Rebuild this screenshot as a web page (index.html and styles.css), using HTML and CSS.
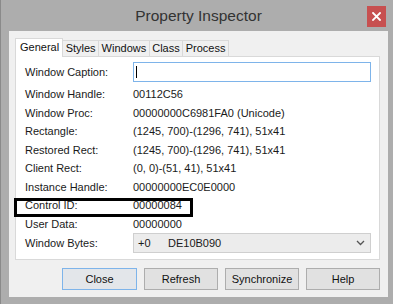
FILE: index.html
```html
<!DOCTYPE html>
<html>
<head>
<meta charset="utf-8">
<link rel="stylesheet" href="styles.css">
</head>
<body>
<div class="window">
  <div class="titlebar">
    <span class="title">Property Inspector</span>
    <button class="close-x" aria-label="Close">
      <svg width="9" height="9" viewBox="0 0 9 9"><path d="M1 1 L8 8 M8 1 L1 8" stroke="#fff" stroke-width="1.8" stroke-linecap="square"/></svg>
    </button>
  </div>
  <div class="client">
    <div class="tabs">
      <div class="tab active">General</div>
      <div class="tab">Styles</div>
      <div class="tab">Windows</div>
      <div class="tab">Class</div>
      <div class="tab">Process</div>
    </div>
    <div class="panel">
      <div class="row caption-row">
        <span class="label">Window Caption:</span>
        <div class="input"><span class="caret"></span></div>
      </div>
      <div class="row"><span class="label">Window Handle:</span><span class="value">00112C56</span></div>
      <div class="row"><span class="label">Window Proc:</span><span class="value">00000000C6981FA0 (Unicode)</span></div>
      <div class="row"><span class="label">Rectangle:</span><span class="value">(1245, 700)-(1296, 741), 51x41</span></div>
      <div class="row"><span class="label">Restored Rect:</span><span class="value">(1245, 700)-(1296, 741), 51x41</span></div>
      <div class="row"><span class="label">Client Rect:</span><span class="value">(0, 0)-(51, 41), 51x41</span></div>
      <div class="row"><span class="label">Instance Handle:</span><span class="value">00000000EC0E0000</span></div>
      <div class="row marked"><span class="label">Control ID:</span><span class="value">00000084</span><span class="mark"></span></div>
      <div class="row"><span class="label">User Data:</span><span class="value">00000000</span></div>
      <div class="row combo-row">
        <span class="label">Window Bytes:</span>
        <div class="combo">
          <span class="offset">+0</span>
          <span class="bytes">DE10B090</span>
          <svg class="chev" width="9" height="6" viewBox="0 0 9 6"><path d="M1 1 L4.5 4.5 L8 1" fill="none" stroke="#555" stroke-width="1.3"/></svg>
        </div>
      </div>
    </div>
    <div class="buttons">
      <button class="btn default">Close</button>
      <button class="btn">Refresh</button>
      <button class="btn">Synchronize</button>
      <button class="btn">Help</button>
    </div>
  </div>
</div>
</body>
</html>
```
FILE: styles.css
```css
* { box-sizing: border-box; }
html, body { margin: 0; padding: 0; }
body {
  width: 393px;
  height: 304px;
  overflow: hidden;
  background: #adadad;
  font-family: "Liberation Sans", Arial, sans-serif;
  font-size: 11px;
  color: #1a1a1a;
}
.window {
  width: 393px;
  height: 304px;
  padding: 0 5px 7px 8px;
  display: flex;
  flex-direction: column;
  background: #adadad;
  border-left: 1px solid #8a8a8a;
}
.titlebar {
  height: 31px;
  display: grid;
  grid-template-columns: 1fr auto 1fr;
  align-items: start;
}
.title {
  grid-column: 2;
  font-size: 15.5px;
  color: #333;
  line-height: 18px;
  margin-top: 7px;
}
.close-x {
  grid-column: 3;
  justify-self: end;
  margin: 6px 2px 0 0;
  width: 19px;
  height: 21px;
  border: none;
  padding: 0;
  background: #c75050;
  display: flex;
  align-items: center;
  justify-content: center;
}
.client {
  flex: 1;
  background: #f0f0f0;
  padding: 7px 8px 7px 6px;
  display: flex;
  flex-direction: column;
}
.tabs {
  display: flex;
  align-items: flex-end;
  height: 18px;
  position: relative;
  z-index: 1;
}
.tab {
  height: 16px;
  line-height: 15px;
  padding: 0 2.5px;
  border: 1px solid #d9d9d9;
  border-bottom: none;
  border-left: none;
  background: #f0f0f0;
  color: #111;
}
.tab.active {
  height: 19px;
  line-height: 17px;
  padding: 0 3px 0 4px;
  border-left: 1px solid #d9d9d9;
  background: #fff;
  margin-bottom: -1px;
}
.panel {
  height: 204px;
  background: #fff;
  border: 1px solid #d9d9d9;
  padding: 5px 8px 6px 9px;
}
.row {
  display: flex;
  align-items: center;
  height: 18.5px;
  position: relative;
}
.label { width: 108px; flex: none; }
.caption-row { height: 20px; margin-bottom: 2.75px; }
.input {
  flex: 1;
  height: 20px;
  border: 1px solid #7eb4ea;
  background: #fff;
  padding: 3px 2px;
}
.caret {
  display: block;
  width: 1px;
  height: 12px;
  background: #000;
}
.mark {
  position: absolute;
  left: -11px;
  top: 2.5px;
  width: 179px;
  height: 18.5px;
  border: 3px solid #000;
}
.combo-row { height: 20px; }
.combo {
  flex: 1;
  height: 20px;
  border: 1px solid #cfcfcf;
  background: #ececec;
  display: flex;
  align-items: center;
  padding: 0 5px 0 4px;
}
.offset { width: 30px; }
.bytes { flex: 1; }
.chev { flex: none; }
.buttons {
  display: flex;
  justify-content: flex-end;
  gap: 7px;
  margin-top: 8px;
}
.btn {
  width: 74px;
  height: 22px;
  border: 1px solid #adadad;
  background: #e1e1e1;
  font-family: "Liberation Sans", Arial, sans-serif;
  font-size: 11px;
  color: #111;
  padding: 0;
}
.btn.default {
  width: 75px;
  border-color: #7eb4ea;
  background: #e3e6ea;
}
```
